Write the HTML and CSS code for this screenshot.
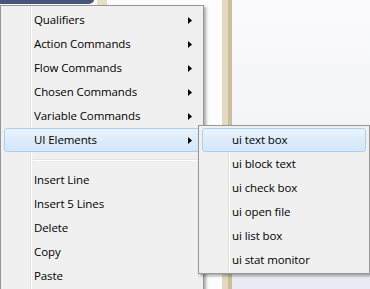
FILE: index.html
```html
<!DOCTYPE html>
<html>
<head>
<meta charset="utf-8">
<link rel="stylesheet" href="styles.css">
</head>
<body>
<div class="screen">
  <div class="backdrop">
    <div class="pane-left">
      <div class="titlebar"><div class="tab"></div><div class="tab-tip"></div></div>
    </div>
    <div class="divider"><div class="divider-light"></div><div class="divider-dark"></div></div>
    <div class="pane-right"></div>
  </div>

  <div class="menu main-menu">
    <div class="item"><span class="label">Qualifiers</span><svg class="arrow" width="4" height="7" viewBox="0 0 4 7"><polygon points="0,0 4,3.5 0,7" fill="#000"/></svg></div>
    <div class="item"><span class="label">Action Commands</span><svg class="arrow" width="4" height="7" viewBox="0 0 4 7"><polygon points="0,0 4,3.5 0,7" fill="#000"/></svg></div>
    <div class="item"><span class="label">Flow Commands</span><svg class="arrow" width="4" height="7" viewBox="0 0 4 7"><polygon points="0,0 4,3.5 0,7" fill="#000"/></svg></div>
    <div class="item"><span class="label">Chosen Commands</span><svg class="arrow" width="4" height="7" viewBox="0 0 4 7"><polygon points="0,0 4,3.5 0,7" fill="#000"/></svg></div>
    <div class="item"><span class="label">Variable Commands</span><svg class="arrow" width="4" height="7" viewBox="0 0 4 7"><polygon points="0,0 4,3.5 0,7" fill="#000"/></svg></div>
    <div class="item active"><span class="label">UI Elements</span><svg class="arrow" width="4" height="7" viewBox="0 0 4 7"><polygon points="0,0 4,3.5 0,7" fill="#000"/></svg></div>
    <div class="separator"></div>
    <div class="item"><span class="label">Insert Line</span></div>
    <div class="item"><span class="label">Insert 5 Lines</span></div>
    <div class="item"><span class="label">Delete</span></div>
    <div class="item"><span class="label">Copy</span></div>
    <div class="item"><span class="label">Paste</span></div>
  </div>

  <div class="menu sub-menu">
    <div class="item active"><span class="label">ui text box</span></div>
    <div class="item"><span class="label">ui block text</span></div>
    <div class="item"><span class="label">ui check box</span></div>
    <div class="item"><span class="label">ui open file</span></div>
    <div class="item"><span class="label">ui list box</span></div>
    <div class="item"><span class="label">ui stat monitor</span></div>
  </div>
</div>
</body>
</html>
```

FILE: styles.css
```css
* { box-sizing: border-box; }

html, body {
  margin: 0;
  padding: 0;
  background: #ffffff;
}

.screen {
  position: relative;
  width: 370px;
  height: 289px;
  overflow: hidden;
  font-family: "Open Sans", "Noto Sans", sans-serif;
  font-size: 11.5px;
  letter-spacing: -0.1px;
  color: #000;
}

.backdrop {
  display: flex;
  width: 370px;
  height: 289px;
}

.pane-left {
  width: 222px;
  background: #fdfdfd;
}

.titlebar {
  display: flex;
  align-items: flex-start;
}

.tab {
  width: 94px;
  height: 4px;
  background: #47557a;
  border-bottom-right-radius: 6px 4px;
}

.tab-tip {
  width: 10px;
  height: 5px;
  margin-left: 3px;
  background: #e8dfc8;
}

.divider {
  display: flex;
  width: 10px;
}

.divider-light {
  width: 6px;
  background: #e4dac0;
}

.divider-dark {
  width: 4px;
  background: #cdbf9d;
}

.pane-right {
  flex: 1;
  background: linear-gradient(to bottom, #fbfbfd 0%, #f1f2f7 60%, #e9ecf4 100%);
}

.menu {
  position: absolute;
  background: #f0f0f0;
  border: 1px solid #979797;
  padding: 2px 2px;
  box-shadow: 2px 2px 3px rgba(0, 0, 0, 0.35);
}

.menu::before {
  content: "";
  position: absolute;
  top: 0;
  bottom: 0;
  left: 29px;
  width: 1px;
  background: #e2e3e3;
  box-shadow: 1px 0 0 #ffffff;
}

.main-menu {
  left: 0;
  top: 5px;
  width: 204px;
  height: 300px;
}

.sub-menu {
  left: 198px;
  top: 125px;
  width: 172px;
  padding-bottom: 1px;
}

.item {
  position: relative;
  display: flex;
  align-items: center;
  justify-content: space-between;
  height: 24px;
  margin: 0 1px;
  padding: 0 7px 0 29px;
  border: 1px solid transparent;
  border-radius: 3px;
  line-height: 22px;
}

.item.active {
  border-color: #a9d1ef;
  background: linear-gradient(to bottom, #eaf4fd 0%, #dcecfb 50%, #d3e7f9 100%);
}

.label {
  white-space: nowrap;
}

.arrow {
  display: block;
  flex: none;
}

.separator {
  position: relative;
  height: 16px;
  margin-left: 30px;
}

.separator::after {
  content: "";
  position: absolute;
  left: 0;
  right: 0;
  top: 7px;
  height: 1px;
  background: #e2e3e3;
  box-shadow: 0 1px 0 #ffffff;
}
```
